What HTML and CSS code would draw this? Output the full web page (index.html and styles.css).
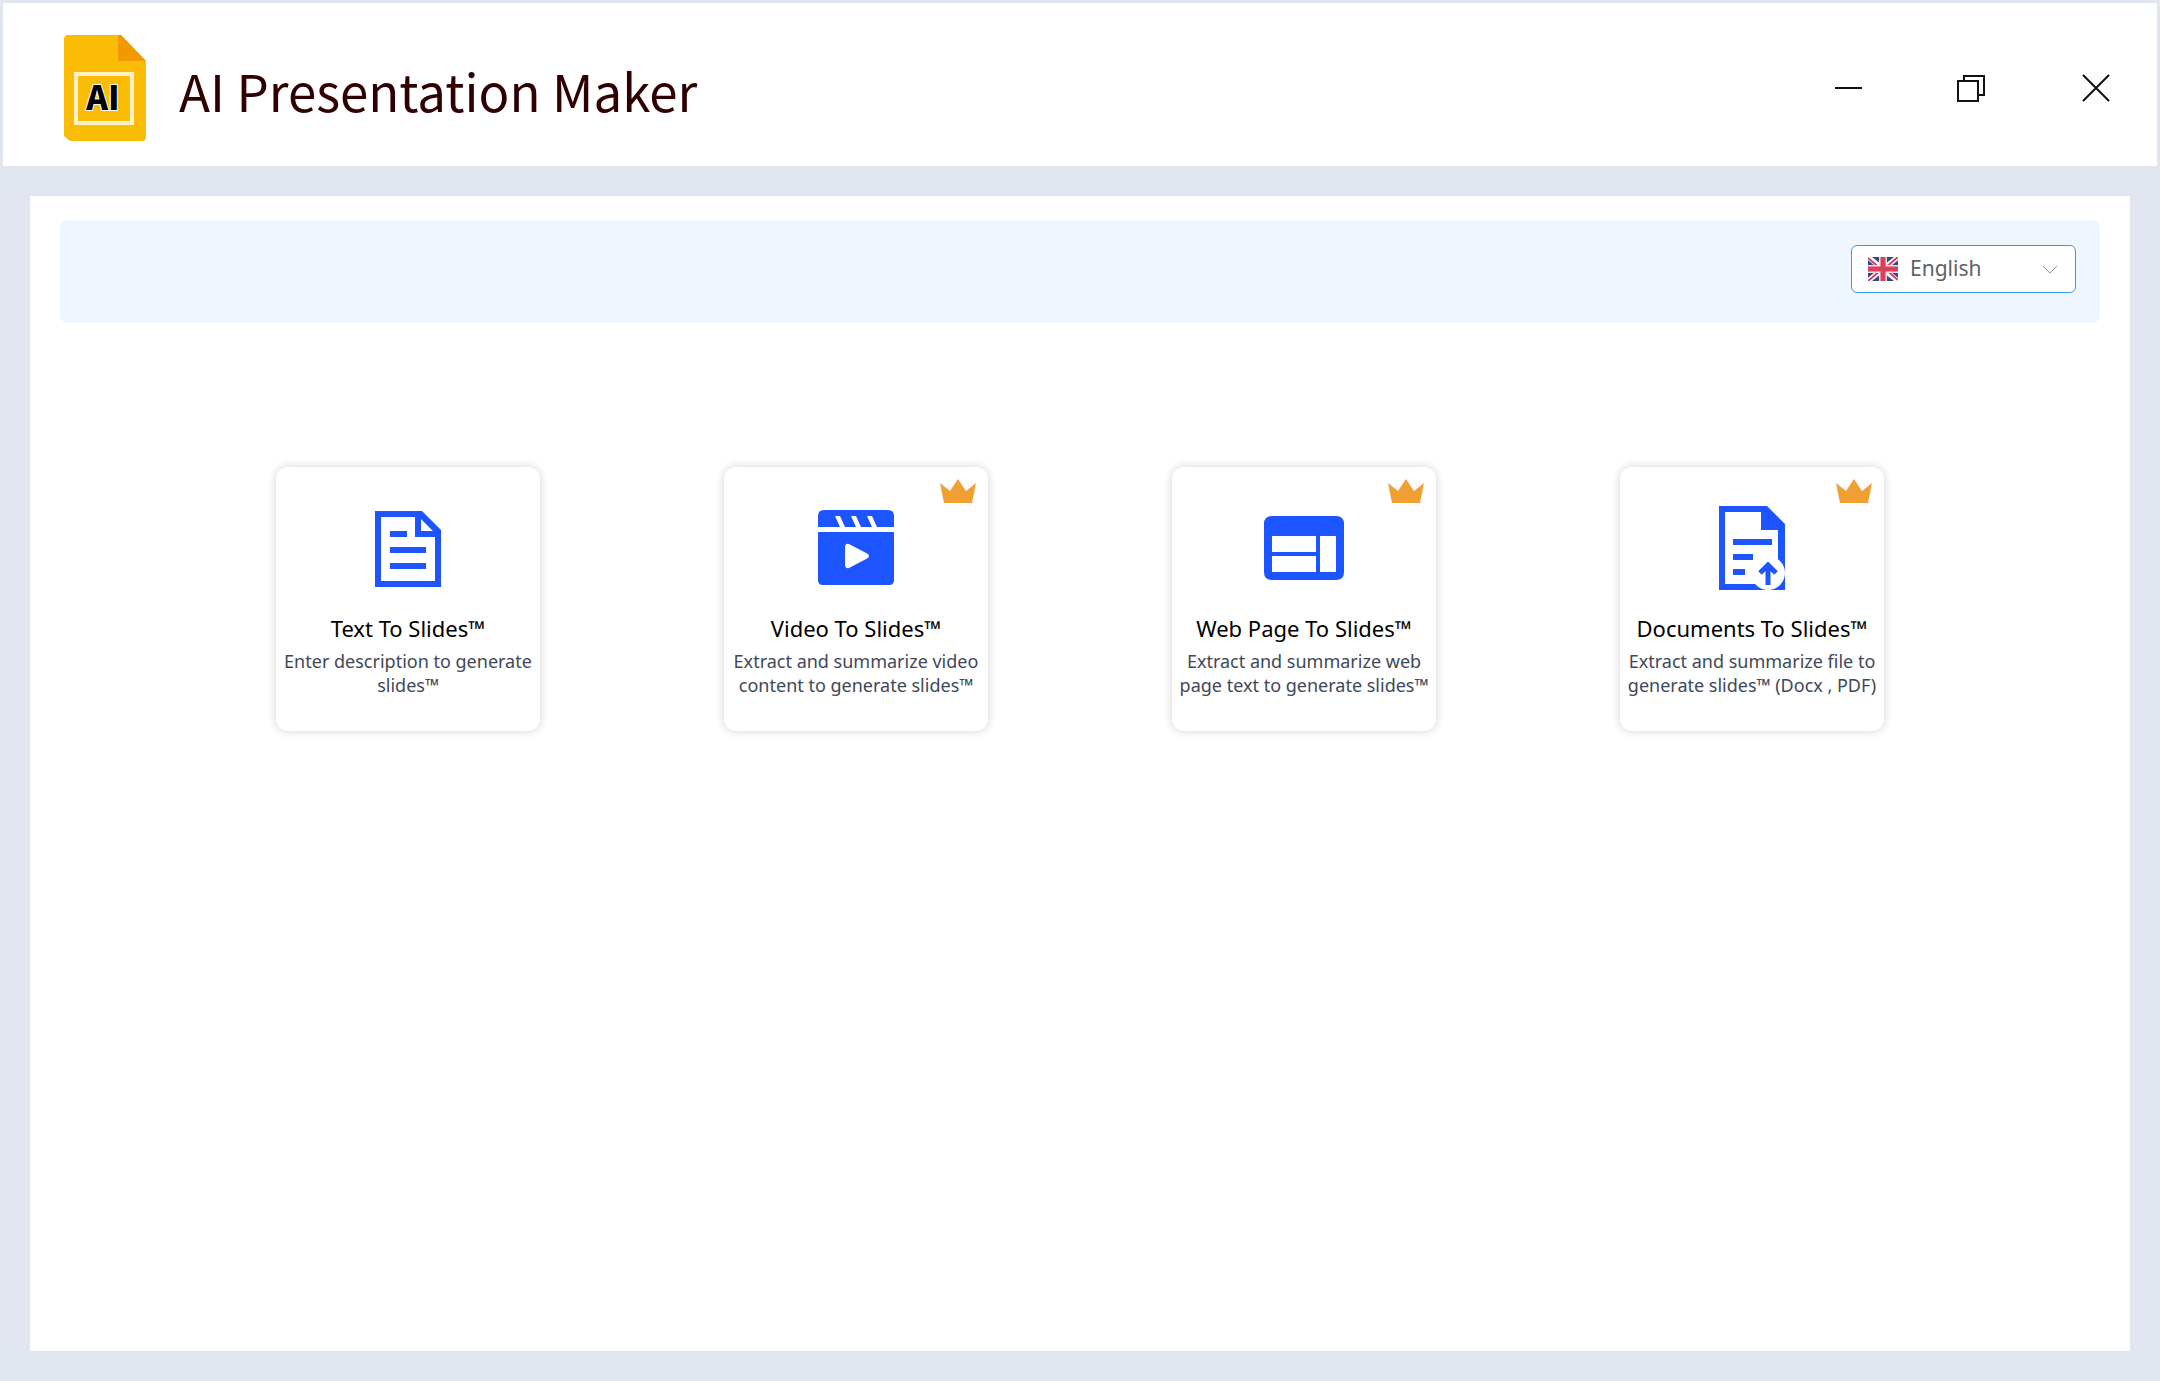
FILE: index.html
```html
<!DOCTYPE html>
<html lang="en">
<head>
    <meta charset="UTF-8">
    <meta name="viewport" content="width=device-width, initial-scale=1.0">
    <title>AI Presentation Maker</title>
    <link rel="stylesheet" href="styles.css">
</head>
<body>
    <header class="titlebar">
        <svg class="logo" viewBox="0 0 82 106" aria-hidden="true">
            <path fill="#fbbc05" d="M4 0H57L82 26V102Q82 106 78 106H6L0 101V4Q0 0 4 0Z"/>
            <path fill="#f29900" d="M54 0H57L82 26H54Z"/>
            <rect x="12" y="39" width="56" height="49" fill="none" stroke="#fff0c8" stroke-width="4"/>
            <text class="logo-text" x="39" y="75" text-anchor="middle">AI</text>
        </svg>
        <h1>AI Presentation Maker</h1>
        <div class="window-controls">
            <button type="button" aria-label="Minimize">
                <svg viewBox="0 0 28 28"><path d="M1 14H28"/></svg>
            </button>
            <button type="button" aria-label="Restore">
                <svg viewBox="0 0 28 28"><path d="M0 7H20V27H0ZM6 7V2H26V21H20"/></svg>
            </button>
            <button type="button" aria-label="Close">
                <svg viewBox="0 0 28 28"><path d="M1 1L27 27M27 1L1 27"/></svg>
            </button>
        </div>
    </header>

    <main class="content">
        <div class="toolbar">
            <div class="language">
                <svg class="flag" viewBox="0 0 30 24" aria-hidden="true">
                    <path fill="#324a8c" d="M0 0H30V24H0Z"/>
                    <path stroke="#fff" stroke-width="5" d="M0 0L30 24M30 0L0 24"/>
                    <path stroke="#d8405c" stroke-width="2" d="M0 1L13 12M30 0L17 11M0 24L13 13M30 23L17 12"/>
                    <path stroke="#f0dce4" stroke-width="8" d="M15 0V24M0 12H30"/>
                    <path stroke="#d8405c" stroke-width="5" d="M15 0V24M0 12H30"/>
                </svg>
                <select id="language" aria-label="Language">
                    <option>English</option>
                </select>
                <svg class="arrow" viewBox="0 0 16 10" aria-hidden="true"><path d="M1 1L8 8L15 1"/></svg>
            </div>
        </div>

        <div class="cards">
            <a class="card" href="#text">
                <svg class="icon" viewBox="0 -2 84 88" aria-hidden="true">
                    <path d="M9 4H56L75 23V80H9ZM15 10V74H69V30H49V10ZM55 12V24H67Z"/>
                    <path d="M24 24H41V30H24ZM24 40H60V46H24ZM24 56H60V62H24Z"/>
                </svg>
                <h2>Text To Slides™</h2>
                <p>Enter description to generate slides™</p>
            </a>
            <a class="card" href="#video">
                <svg class="icon" viewBox="0 -2 84 88" aria-hidden="true">
                    <path d="M10 3H74Q80 3 80 9V20H63L58 9H53L58 20H47L42 9H37L42 20H31L26 9H21L26 20H4V9Q4 3 10 3Z"/>
                    <path d="M4 25H80V73Q80 78 75 78H9Q4 78 4 73ZM31 39V59Q32 62 35 61L54 51Q56 49 54 47L35 37Q32 36 31 39Z"/>
                </svg>
                <svg class="crown" viewBox="0 0 36 24" aria-label="Premium"><path d="M0 4L10 12L18 0L26 12L36 4L32 24H4Z"/></svg>
                <h2>Video To Slides™</h2>
                <p>Extract and summarize video content to generate slides™</p>
            </a>
            <a class="card" href="#web">
                <svg class="icon" viewBox="0 -2 84 88" aria-hidden="true">
                    <path d="M10 9H74Q82 9 82 17V65Q82 73 74 73H10Q2 73 2 65V17Q2 9 10 9ZM10 29V45H54V29ZM10 49V65H54V49ZM58 29V65H74V29Z"/>
                </svg>
                <svg class="crown" viewBox="0 0 36 24" aria-label="Premium"><path d="M0 4L10 12L18 0L26 12L36 4L32 24H4Z"/></svg>
                <h2>Web Page To Slides™</h2>
                <p>Extract and summarize web page text to generate slides™</p>
            </a>
            <a class="card" href="#documents">
                <svg class="icon" viewBox="0 -2 84 88" aria-hidden="true">
                    <path d="M9 -1H57L75 17V83H9ZM15 5V77H68V23H51V5Z"/>
                    <path d="M23 32H62V38H23ZM23 47H43V53H23ZM23 62H35V68H23Z"/>
                    <circle cx="58" cy="66" r="17" fill="#fff"/>
                    <path fill="none" stroke="#1c55ff" stroke-width="5" d="M50 66L58 58L66 66M58 58V78"/>
                </svg>
                <svg class="crown" viewBox="0 0 36 24" aria-label="Premium"><path d="M0 4L10 12L18 0L26 12L36 4L32 24H4Z"/></svg>
                <h2>Documents To Slides™</h2>
                <p>Extract and summarize file to generate slides™ (Docx , PDF)</p>
            </a>
        </div>
    </main>
</body>
</html>
```

FILE: styles.css
```css
* {
    box-sizing: border-box;
}
body {
    display: flex;
    flex-direction: column;
    min-height: 100vh;
    margin: 0;
    padding: 3px;
    background-color: #e1e5f0;
    font-family: "Noto Sans", sans-serif;
}
.titlebar {
    display: flex;
    align-items: center;
    padding: 32px 47px 25px 61px;
    background-color: white;
}
.logo {
    width: 82px;
    height: 106px;
}
.logo-text {
    font: 900 33px "Noto Sans CJK SC", sans-serif;
    stroke: white;
    stroke-width: 2px;
    paint-order: stroke;
}
.titlebar h1 {
    margin: 0 0 0 33px;
    padding-top: 4px;
    color: #300000;
    font: 400 51px/80px "Noto Sans CJK SC", sans-serif;
}
.window-controls {
    display: flex;
    gap: 96px;
    margin-left: auto;
}
.window-controls button {
    padding: 0;
    border: none;
    background: none;
    cursor: pointer;
}
.window-controls svg {
    display: block;
    overflow: visible;
    width: 28px;
    height: 28px;
    fill: none;
    stroke: #111;
    stroke-width: 2px;
}
.content {
    flex: 1;
    margin: 30px 27px 27px;
    padding: 24px 30px;
    background-color: white;
}
.toolbar {
    display: flex;
    justify-content: flex-end;
    padding: 25px 24px 30px;
    border-radius: 8px;
    background-color: #eff6ff;
}
.language {
    position: relative;
    width: 225px;
}
.language select {
    display: block;
    width: 100%;
    height: 48px;
    padding: 0 40px 2px 58px;
    border: 1px solid #3f97ec;
    border-radius: 6px;
    background-color: white;
    color: #606266;
    font: 21px "Noto Sans", sans-serif;
    appearance: none;
}
.flag {
    position: absolute;
    top: 12px;
    left: 17px;
    width: 30px;
    height: 24px;
}
.arrow {
    position: absolute;
    top: 20px;
    right: 18px;
    width: 16px;
    height: 10px;
    fill: none;
    stroke: #90949c;
    pointer-events: none;
}
.cards {
    display: grid;
    grid-template-columns: repeat(4, 1fr);
    justify-items: center;
    margin-top: 144px;
    padding: 0 124px;
}
.card {
    position: relative;
    width: 264px;
    min-height: 264px;
    padding: 38px 4px 24px;
    border-radius: 12px;
    background-color: white;
    box-shadow: 0 0 10px rgba(0, 0, 0, 0.18);
    text-align: center;
    text-decoration: none;
}
.icon {
    display: block;
    width: 84px;
    height: 88px;
    margin: 0 auto 20px;
    fill: #1c55ff;
}
.crown {
    position: absolute;
    top: 12px;
    right: 12px;
    width: 36px;
    height: 24px;
    fill: #f0a033;
}
.card h2 {
    margin: 0 0 6px;
    color: black;
    font-size: 22px;
    font-weight: 400;
    line-height: 30px;
}
.card p {
    margin: 0;
    color: #404858;
    font-size: 18px;
    line-height: 24px;
}
```
